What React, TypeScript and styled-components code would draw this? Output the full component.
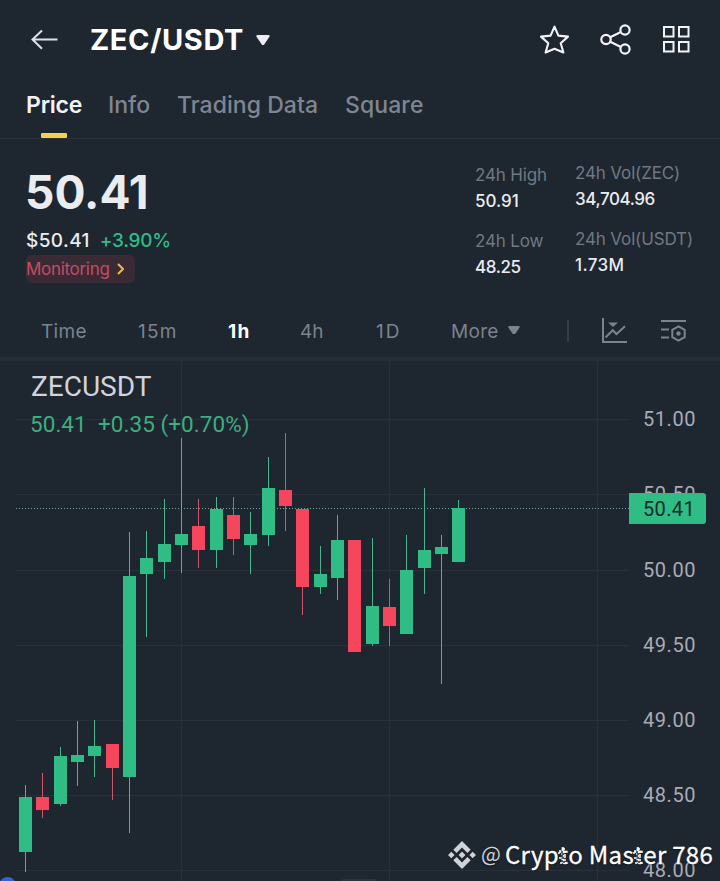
import React from "react";
import styled, { createGlobalStyle } from "styled-components";

const GlobalStyle = createGlobalStyle`
  * { box-sizing: border-box; }
  html, body { margin: 0; padding: 0; background: #1e262f; }
  svg { display: block; }
`;

const ui = `Inter, "Noto Sans", sans-serif`;
const green = "#2fbd85";
const red = "#f6465d";

const Screen = styled.main`
  width: 720px;
  height: 881px;
  overflow: hidden;
  display: flex;
  flex-direction: column;
  background: #1e262f;
  color: #eaecef;
  font-family: ${ui};
`;

const Header = styled.header`
  height: 80px;
  display: flex;
  align-items: center;
  padding: 0 30px 0 30px;
`;

const Pair = styled.h1`
  margin: 0 0 0 32px;
  width: 166px;
  font-size: 29px;
  line-height: 40px;
  font-weight: 700;
  letter-spacing: 0.6px;
  color: #fff;
  white-space: nowrap;
`;

const Actions = styled.div`
  margin-left: auto;
  display: flex;
  align-items: center;
  gap: 30px;
`;

const Tabs = styled.nav`
  height: 59px;
  display: flex;
  padding-left: 26px;
  border-bottom: 1px solid #2b323b;
`;

const Tab = styled.div<{ $active?: boolean; $w: number; $ls: number }>`
  width: ${(p) => p.$w}px;
  height: 58px;
  display: flex;
  flex-direction: column;
  justify-content: space-between;
  font-size: 23px;
  line-height: 51px;
  font-weight: ${(p) => (p.$active ? 600 : 500)};
  letter-spacing: ${(p) => p.$ls}px;
  color: ${(p) => (p.$active ? "#f2f3f5" : "#7e8692")};
  white-space: nowrap;
`;

const TabMark = styled.span`
  width: 26px;
  height: 5px;
  margin-left: 15px;
  border-radius: 1px;
  background: #f6d14b;
`;

const Summary = styled.section`
  height: 165px;
  display: flex;
  padding-left: 26px;
`;

const PriceBlock = styled.div`
  width: 449px;
  display: flex;
  flex-direction: column;
  align-items: flex-start;
  padding-top: 23px;
`;

const BigPrice = styled.div`
  margin-left: -1px;
  font-size: 46px;
  line-height: 60px;
  font-weight: 650;
  letter-spacing: 0;
`;

const Change = styled.div`
  margin-top: 7px;
  display: flex;
  gap: 10px;
  font-size: 19px;
  line-height: 24px;
  font-weight: 550;
  letter-spacing: 0.4px;
`;

const Gain = styled.span`
  color: ${green};
  font-weight: 450;
  letter-spacing: -0.3px;
`;

const Monitoring = styled.div`
  margin-top: 2px;
  width: 109px;
  height: 28px;
  display: flex;
  align-items: center;
  gap: 7px;
  border-radius: 6px;
  background: #392a35;
  color: #c34d62;
  font-size: 17px;
  letter-spacing: -0.3px;
`;

const StatColumn = styled.div<{ $top: number; $w: number }>`
  width: ${(p) => p.$w}px;
  padding-top: ${(p) => p.$top}px;
  display: flex;
  flex-direction: column;
  gap: 14px;
`;

const Stat = styled.div`
  height: 52px;
  font-size: 17px;
  line-height: 26px;
  white-space: nowrap;
`;

const StatLabel = styled.div`
  color: #707884;
  letter-spacing: -0.14px;
`;

const StatValue = styled.div<{ $ls?: number }>`
  color: #eaecef;
  font-weight: 500;
  letter-spacing: ${(p) => p.$ls ?? 0}px;
`;

const Toolbar = styled.div`
  height: 53px;
  display: flex;
  align-items: center;
  padding-left: 41px;
  font-size: 19px;
`;

const Interval = styled.div<{ $w: number; $active?: boolean; $ls?: number }>`
  width: ${(p) => p.$w}px;
  padding-top: 2px;
  display: flex;
  align-items: center;
  color: ${(p) => (p.$active ? "#fff" : "#7b838e")};
  font-weight: ${(p) => (p.$active ? 700 : 400)};
  letter-spacing: ${(p) => p.$ls ?? 0}px;
  white-space: nowrap;
`;

const Caret = styled.span`
  margin: -3px 0 0 9px;
`;

const Divider = styled.span`
  width: 2px;
  height: 22px;
  margin-right: 32px;
  background: #353c46;
`;

const Tools = styled.div`
  display: flex;
  align-items: center;
  gap: 33px;
`;

const Rule = styled.div`
  height: 4px;
  background: #262d36;
`;

const ChartArea = styled.section`
  position: relative;
  height: 520px;
`;

const Legend = styled.div`
  position: absolute;
  left: 30px;
  top: 8px;
  font-family: Roboto, sans-serif;
  white-space: pre;
`;

const Ticker = styled.div`
  margin-left: 1px;
  font-size: 28px;
  line-height: 36px;
  color: #d2d3db;
`;

const LegendChange = styled.div`
  margin-top: 3px;
  font-size: 22.5px;
  line-height: 32px;
  letter-spacing: 0.05px;
  color: #3dae7f;
`;

const PriceTag = styled.div`
  position: absolute;
  left: 629px;
  top: 132px;
  width: 77px;
  height: 31px;
  padding-left: 14px;
  border-radius: 0 3px 3px 0;
  background: ${green};
  color: #0e2a28;
  font: 20px/32px Roboto, sans-serif;
  letter-spacing: 0.35px;
`;

const Watermark = styled.div`
  position: absolute;
  left: 448px;
  top: 476px;
  height: 36px;
  display: flex;
  align-items: center;
  color: #fff;
  font: 24px/36px "Noto Sans CJK SC", sans-serif;
  white-space: nowrap;
  text-shadow: 0 1px 2px rgba(0, 0, 0, 0.5);
`;

const At = styled.span`
  width: 24px;
  margin: -5px 0 0 5px;
  font-size: 21px;
  color: #d0d2d9;
`;

const Name = styled.span`
  margin-top: -3px;
  font-weight: 400;
  letter-spacing: 0.3px;
  -webkit-text-stroke: 0.3px #fff;
`;

const Rough = styled.span`
  position: relative;
  display: inline-block;
`;

const RoughMarks = styled.svg`
  position: absolute;
  left: -1px;
  top: 9px;
`;

const Bubble = styled.span`
  position: absolute;
  left: -1px;
  top: 516px;
  width: 17px;
  height: 17px;
  border-radius: 50%;
  background: #3460dc;
`;

const Handle = styled.span`
  position: absolute;
  left: 341px;
  top: 518px;
  width: 36px;
  height: 6px;
  border-radius: 3px;
  background: #2c333d;
`;

// Left edge, wick top, body top, body bottom, wick bottom, falling
type Candle = [number, number, number, number, number, boolean?];
const candles: Candle[] = [
  [19, 785, 797, 852, 872],
  [36, 773, 797, 810, 818, true],
  [54, 747, 756, 804, 806],
  [71, 721, 755, 762, 786],
  [88, 720, 746, 756, 777],
  [106, 744, 744, 768, 800, true],
  [123, 532, 576, 777, 833],
  [140, 531, 558, 574, 637],
  [158, 499, 544, 562, 579],
  [175, 438, 534, 545, 573],
  [192, 499, 526, 550, 568, true],
  [210, 497, 509, 550, 568],
  [227, 497, 515, 539, 555, true],
  [244, 512, 534, 545, 574],
  [262, 457, 488, 535, 546],
  [279, 433, 490, 506, 531, true],
  [296, 509, 509, 587, 615, true],
  [314, 546, 574, 587, 594],
  [331, 515, 540, 578, 600],
  [348, 540, 540, 652, 652, true],
  [366, 538, 606, 644, 646],
  [383, 579, 607, 626, 646, true],
  [400, 535, 570, 634, 634],
  [418, 488, 550, 568, 594],
  [435, 535, 547, 554, 684],
  [452, 500, 508, 562, 562],
];

const levels: [number, string][] = [
  [419, "51.00"],
  [494, "50.50"],
  [570, "50.00"],
  [645, "49.50"],
  [720, "49.00"],
  [795, "48.50"],
  [870, "48.00"],
];

const CandleChart = () => (
  <svg width="720" height="520" viewBox="0 361 720 520">
    <g fill="#29303a">
      {levels.map(([y]) => (
        <rect key={y} x="16" y={y} width="613" height="1" />
      ))}
      {[181, 389, 597].map((x) => (
        <rect key={x} x={x} y="361" width="1" height="520" />
      ))}
    </g>
    <line x1="16" x2="629" y1="508.5" y2="508.5" stroke="#74a89a" strokeDasharray="1 2" />
    {candles.map(([x, high, top, bottom, low, falling]) => (
      <g key={x}>
        <rect x={x + 6} y={high} width="1" height={low - high} fill={falling ? "#d0546a" : "#45b78b"} />
        <rect x={x} y={top} width="13" height={bottom - top} fill={falling ? red : green} />
      </g>
    ))}
    <g fill="#a9abb7" fontFamily="Roboto, sans-serif" fontSize="20">
      {levels.map(([y, label]) => (
        <text key={label} x="643" y={y + 7.4} textLength="52.5">
          {label}
        </text>
      ))}
    </g>
  </svg>
);

const BackIcon = () => (
  <svg width="28" height="22" viewBox="0 0 28 22" fill="none" stroke="#dfe1ea" strokeWidth="2">
    <path d="M27.500 10.500H2M12 1.500 2.500 10.500l9.500 9.200" />
  </svg>
);

const StarIcon = () => (
  <svg width="30" height="30" viewBox="0 0 30 30" fill="none" stroke="#f2f3f7" strokeWidth="2.100" strokeLinejoin="round">
    <path d="m14.500 1.700 3.900 8.900 9.600 1-7.300 6.600 2.700 9.300-8.900-3.700-8.900 3.700 2.700-9.300L1 11.600l9.600-1Z" />
  </svg>
);

const ShareIcon = () => (
  <svg width="32" height="32" viewBox="0 0 32 32" fill="none" stroke="#f2f3f7" strokeWidth="2.200">
    <circle cx="6" cy="15.500" r="4.700" />
    <circle cx="25" cy="6" r="4.600" />
    <circle cx="25" cy="25" r="4.600" />
    <path d="m10.200 13.200 10.700-5.200M10.200 17.800l10.700 5.200" />
  </svg>
);

const GridIcon = () => (
  <svg width="28" height="28" viewBox="0 0 28 28" fill="none" stroke="#f2f3f7" strokeWidth="2">
    <path d="M2 1h9.500v9.500H2ZM17 1h9.500v9.500H17ZM2 16h9.500v9.500H2ZM17 16h9.500v9.500H17Z" />
  </svg>
);

const IndicatorIcon = () => (
  <svg width="26" height="26" viewBox="0 0 26 26" fill="none" stroke="#7b838e" strokeWidth="2">
    <path d="M2 0v24H26M4.500 19.500l7.300-7.300 3.700 3.800 8.500-7.700" />
    <path d="M7 4.500h10l-5 4.500Z" fill="#7b838e" stroke="none" />
  </svg>
);

const SettingsIcon = () => (
  <svg width="26" height="24" viewBox="0 0 26 24" fill="none" stroke="#7b838e" strokeWidth="2">
    <path d="M1 2h25M1 10.500h8M1 18.500h8M18.500 7.300l6.200 3.600v7.200l-6.200 3.600-6.200-3.600v-7.200Z" />
    <circle cx="18.500" cy="14.500" r="2.200" fill="#7b838e" stroke="none" />
  </svg>
);

const BrandMark = () => (
  <svg width="28" height="28" viewBox="0 0 28 28" fill="#d0d2d9">
    <path d="m14 0 8.700 8.700-3.300 3.300L14 6.500 8.600 12 5.300 8.700ZM3.300 10.700 6.600 14l-3.300 3.300L0 14ZM14 10.600l3.400 3.400-3.400 3.400-3.400-3.400ZM24.700 10.700 28 14l-3.300 3.300-3.300-3.300ZM8.600 16l5.400 5.500 5.400-5.500 3.300 3.300L14 28l-8.700-8.700Z" />
  </svg>
);

const DownCaret = ({ width, fill }: { width: number; fill: string }) => (
  <svg width={width} height={width * 0.72} viewBox="0 0 14 10.500" preserveAspectRatio="none" fill={fill}>
    <path d="M1.500 0h11q1.500 0 1 1.700l-.6 1L8.200 10q-1.200 1.200-2.400 0L1 2.700l-.6-1Q0 0 1.500 0Z" />
  </svg>
);

const RoughT = () => (
  <Rough>
    t
    <RoughMarks width="9" height="20" viewBox="0 0 9 20">
      <path d="M1 6h2M5 4h2M0 8h2M6 10h2M1 13h2M5 15h3M2 18h2M6 18h2M6 12h2" stroke="#fff" strokeWidth="1.500" />
      <path d="M3 7h2M4 9h2M2 11h3M4 13h2M3 16h2M5 17h2" stroke="#1e262f" strokeWidth="1.300" />
    </RoughMarks>
  </Rough>
);

export default function App() {
  return (
    <>
      <GlobalStyle />
      <Screen>
        <Header>
          <BackIcon />
          <Pair>ZEC/USDT</Pair>
          <DownCaret width={14} fill="#eceef4" />
          <Actions>
            <StarIcon />
            <ShareIcon />
            <GridIcon />
          </Actions>
        </Header>
        <Tabs>
          <Tab $active $w={82} $ls={-0.2}>
            Price
            <TabMark />
          </Tab>
          <Tab $w={69} $ls={0}>Info</Tab>
          <Tab $w={168} $ls={0.05}>Trading Data</Tab>
          <Tab $w={90} $ls={0.1}>Square</Tab>
        </Tabs>
        <Summary>
          <PriceBlock>
            <BigPrice>50.41</BigPrice>
            <Change>
              <span>$50.41</span>
              <Gain>+3.90%</Gain>
            </Change>
            <Monitoring>
              Monitoring
              <svg width="7" height="12" viewBox="0 0 7 12" fill="none" stroke="#e5bd46" strokeWidth="2">
                <path d="m1 1 5 5-5 5" />
              </svg>
            </Monitoring>
          </PriceBlock>
          <StatColumn $top={23} $w={100}>
            <Stat>
              <StatLabel>24h High</StatLabel>
              <StatValue>50.91</StatValue>
            </Stat>
            <Stat>
              <StatLabel>24h Low</StatLabel>
              <StatValue $ls={-0.4}>48.25</StatValue>
            </Stat>
          </StatColumn>
          <StatColumn $top={21} $w={130}>
            <Stat>
              <StatLabel>24h Vol(ZEC)</StatLabel>
              <StatValue $ls={-0.4}>34,704.96</StatValue>
            </Stat>
            <Stat>
              <StatLabel>24h Vol(USDT)</StatLabel>
              <StatValue $ls={0.4}>1.73M</StatValue>
            </Stat>
          </StatColumn>
        </Summary>
        <Toolbar>
          <Interval $w={97} $ls={0.3}>Time</Interval>
          <Interval $w={90} $ls={1.2}>15m</Interval>
          <Interval $w={72} $active $ls={1.2}>1h</Interval>
          <Interval $w={76}>4h</Interval>
          <Interval $w={75} $ls={2}>1D</Interval>
          <Interval $w={116} $ls={0.3}>
            More
            <Caret>
              <DownCaret width={12} fill="#7b838e" />
            </Caret>
          </Interval>
          <Divider />
          <Tools>
            <IndicatorIcon />
            <SettingsIcon />
          </Tools>
        </Toolbar>
        <Rule />
        <ChartArea>
          <CandleChart />
          <Legend>
            <Ticker>ZECUSDT</Ticker>
            <LegendChange>{"50.41  +0.35 (+0.70%)"}</LegendChange>
          </Legend>
          <PriceTag>50.41</PriceTag>
          <Watermark>
            <BrandMark />
            <At>@</At>
            <Name>
              Cryp<RoughT />o Mas<RoughT />er 786
            </Name>
          </Watermark>
          <Bubble />
          <Handle />
        </ChartArea>
      </Screen>
    </>
  );
}
